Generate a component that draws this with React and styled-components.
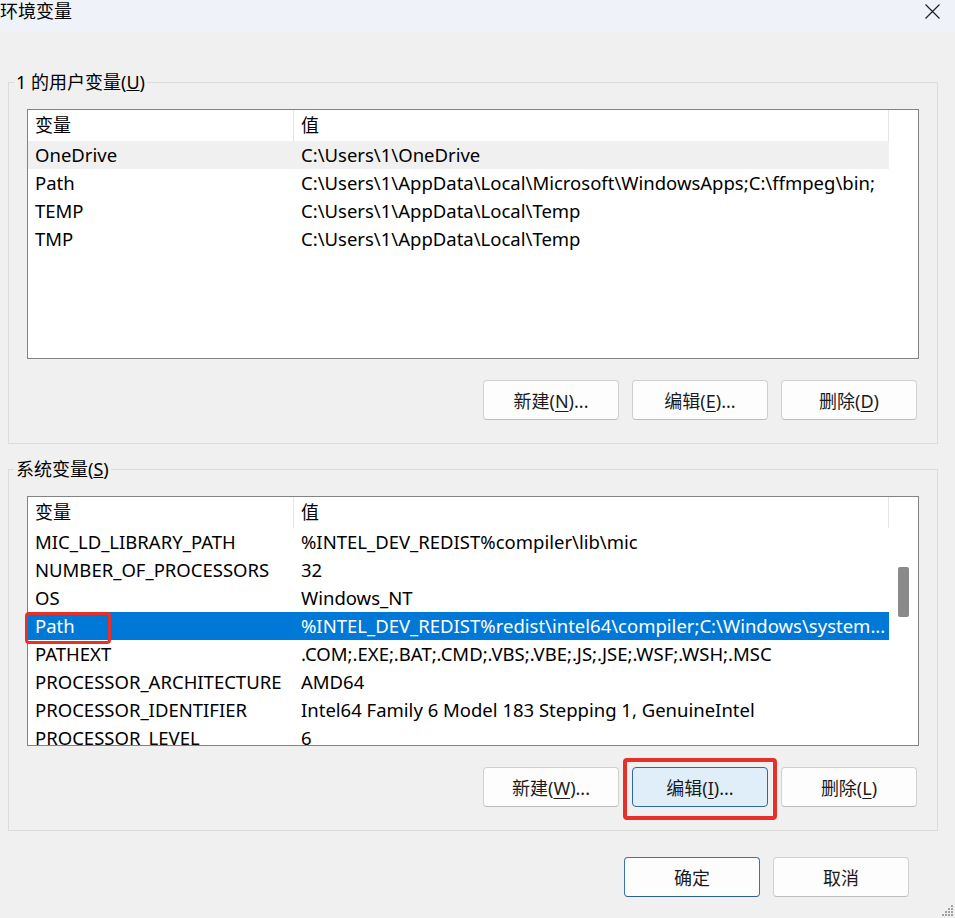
import React from "react";
import styled, { createGlobalStyle } from "styled-components";

const GlobalStyle = createGlobalStyle`
  html, body {
    margin: 0;
    padding: 0;
  }
  body {
    background: #f0f0f0;
    font-family: "Noto Sans", "Noto Sans CJK SC", sans-serif;
    color: #000;
  }
`;

const userVars = [
  ["OneDrive", "C:\\Users\\1\\OneDrive"],
  ["Path", "C:\\Users\\1\\AppData\\Local\\Microsoft\\WindowsApps;C:\\ffmpeg\\bin;"],
  ["TEMP", "C:\\Users\\1\\AppData\\Local\\Temp"],
  ["TMP", "C:\\Users\\1\\AppData\\Local\\Temp"],
];

const sysVars = [
  ["MIC_LD_LIBRARY_PATH", "%INTEL_DEV_REDIST%compiler\\lib\\mic"],
  ["NUMBER_OF_PROCESSORS", "32"],
  ["OS", "Windows_NT"],
  ["Path", "%INTEL_DEV_REDIST%redist\\intel64\\compiler;C:\\Windows\\system..."],
  ["PATHEXT", ".COM;.EXE;.BAT;.CMD;.VBS;.VBE;.JS;.JSE;.WSF;.WSH;.MSC"],
  ["PROCESSOR_ARCHITECTURE", "AMD64"],
  ["PROCESSOR_IDENTIFIER", "Intel64 Family 6 Model 183 Stepping 1, GenuineIntel"],
  ["PROCESSOR_LEVEL", "6"],
];

const Dialog = styled.div`
  position: relative;
  width: 955px;
  height: 918px;
  overflow: hidden;
  background: #f0f0f0;
`;

const TitleBar = styled.div`
  height: 32px;
  display: flex;
  justify-content: space-between;
  align-items: flex-start;
  background: #eff3f9;
  padding-right: 14px;
`;

const Title = styled.div`
  font-size: 18px;
  line-height: 22px;
`;

const CloseIcon = styled.svg`
  margin-top: 3px;
`;

const Content = styled.div`
  padding: 38px 17px 0 8px;
`;

const Group = styled.fieldset`
  margin: ${(p) => (p.$first ? "0" : "13px")} 0 0 0;
  padding: 15px 18px 23px 18px;
  border: 1px solid #dcdcdc;
  min-inline-size: 0;
`;

const Legend = styled.legend`
  margin-left: -13px;
  padding: 0 2px;
  font-size: 18px;
  line-height: 24px;
`;

const ListFrame = styled.div`
  position: relative;
  width: 892px;
  height: 250px;
`;

const ListBox = styled.div`
  box-sizing: border-box;
  width: 100%;
  height: 100%;
  border: 1px solid #838383;
  background: #fff;
  overflow: hidden;
  display: flex;
`;

const Table = styled.div`
  width: 861px;
  font-size: 18px;
`;

const HeaderRow = styled.div`
  display: grid;
  grid-template-columns: 266px 595px;
  height: 31px;
`;

const HeaderCell = styled.div`
  padding-left: 7px;
  line-height: 30px;
  border-right: 1px solid #e5e5e5;
`;

const Row = styled.div`
  display: grid;
  grid-template-columns: 266px 595px;
  height: 28px;
  line-height: 28px;
  background: ${(p) =>
    p.$sel === "active" ? "#0078d7" : p.$sel === "inactive" ? "#f0f0f0" : "transparent"};
  color: ${(p) => (p.$sel === "active" ? "#fff" : "#000")};
`;

const Cell = styled.div`
  padding-left: 7px;
  font-size: 18.5px;
  white-space: nowrap;
  overflow: hidden;
`;

const ScrollTrack = styled.div`
  flex: 1;
  padding: ${(p) => p.$offset}px 0 0 9px;
`;

const Thumb = styled.div`
  width: 11px;
  height: 50px;
  background: #8a8a8a;
  border-radius: 2px;
`;

const RowMark = styled.div`
  position: absolute;
  left: -2px;
  top: ${(p) => p.$top}px;
  width: 86px;
  height: 32px;
  box-sizing: border-box;
  border: 3px solid #e8302a;
  border-radius: 4px;
`;

const ButtonRow = styled.div`
  display: flex;
  justify-content: flex-end;
  gap: 13px;
  margin-top: 21px;
  padding-right: 2px;
`;

const FooterRow = styled(ButtonRow)`
  margin-top: 26px;
  padding-right: 29px;
`;

const Button = styled.button`
  width: 136px;
  height: 40px;
  box-sizing: border-box;
  font-family: "Noto Sans", "Noto Sans CJK SC", sans-serif;
  font-size: 18px;
  color: #1b1b1b;
  border-radius: 4px;
  padding: 0;
  background: ${(p) => (p.$variant === "focused" ? "#e0eef9" : "#fdfdfd")};
  border: 1px solid
    ${(p) =>
      p.$variant === "focused" ? "#2d6a9f" : p.$variant === "default" ? "#3b73ad" : "#d0d0d0"};
  border-bottom-color: ${(p) =>
    p.$variant === "focused" ? "#2d6a9f" : p.$variant === "default" ? "#2f5f92" : "#bdbdbd"};
  u {
    text-underline-offset: 3px;
  }
`;

const MarkWrap = styled.span`
  position: relative;
  display: inline-flex;
`;

const ButtonMark = styled.span`
  position: absolute;
  left: -9px;
  top: -9px;
  width: 154px;
  height: 62px;
  box-sizing: border-box;
  border: 4px solid #e8302a;
  border-radius: 4px;
  pointer-events: none;
`;

const Grip = styled.svg`
  position: absolute;
  right: 1px;
  bottom: 1px;
`;

const VarList = ({ rows, selected, selectState, scroll, markRow }) => (
  <ListFrame>
    <ListBox>
      <Table>
        <HeaderRow>
          <HeaderCell>变量</HeaderCell>
          <HeaderCell>值</HeaderCell>
        </HeaderRow>
        {rows.map(([name, value], i) => (
          <Row key={name} $sel={i === selected ? selectState : null}>
            <Cell>{name}</Cell>
            <Cell>{value}</Cell>
          </Row>
        ))}
      </Table>
      <ScrollTrack $offset={70}>{scroll && <Thumb />}</ScrollTrack>
    </ListBox>
    {markRow !== undefined && <RowMark $top={32 + markRow * 28} />}
  </ListFrame>
);

const App = () => (
  <Dialog>
    <GlobalStyle />
    <TitleBar>
      <Title>环境变量</Title>
      <CloseIcon width="17" height="17" viewBox="0 0 17 17">
        <path d="M1.5 1.5 L15.5 15.5 M15.5 1.5 L1.5 15.5" stroke="#1f1f1f" strokeWidth="1.2" fill="none" />
      </CloseIcon>
    </TitleBar>
    <Content>
      <Group $first>
        <Legend>
          1 的用户变量(<u>U</u>)
        </Legend>
        <VarList rows={userVars} selected={0} selectState="inactive" />
        <ButtonRow>
          <Button>
            新建(<u>N</u>)...
          </Button>
          <Button>
            编辑(<u>E</u>)...
          </Button>
          <Button>
            删除(<u>D</u>)
          </Button>
        </ButtonRow>
      </Group>
      <Group>
        <Legend>
          系统变量(<u>S</u>)
        </Legend>
        <VarList rows={sysVars} selected={3} selectState="active" scroll markRow={3} />
        <ButtonRow>
          <Button>
            新建(<u>W</u>)...
          </Button>
          <MarkWrap>
            <Button $variant="focused">
              编辑(<u>I</u>)...
            </Button>
            <ButtonMark />
          </MarkWrap>
          <Button>
            删除(<u>L</u>)
          </Button>
        </ButtonRow>
      </Group>
      <FooterRow>
        <Button $variant="default">确定</Button>
        <Button>取消</Button>
      </FooterRow>
    </Content>
    <Grip width="13" height="13" viewBox="0 0 13 13">
      {[
        [10, 2],
        [7, 5],
        [10, 5],
        [4, 8],
        [7, 8],
        [10, 8],
        [1, 11],
        [4, 11],
        [7, 11],
        [10, 11],
      ].map(([x, y]) => (
        <rect key={`${x}-${y}`} x={x} y={y - 1} width="2" height="2" fill="#a0a0a0" />
      ))}
    </Grip>
  </Dialog>
);

export default App;
